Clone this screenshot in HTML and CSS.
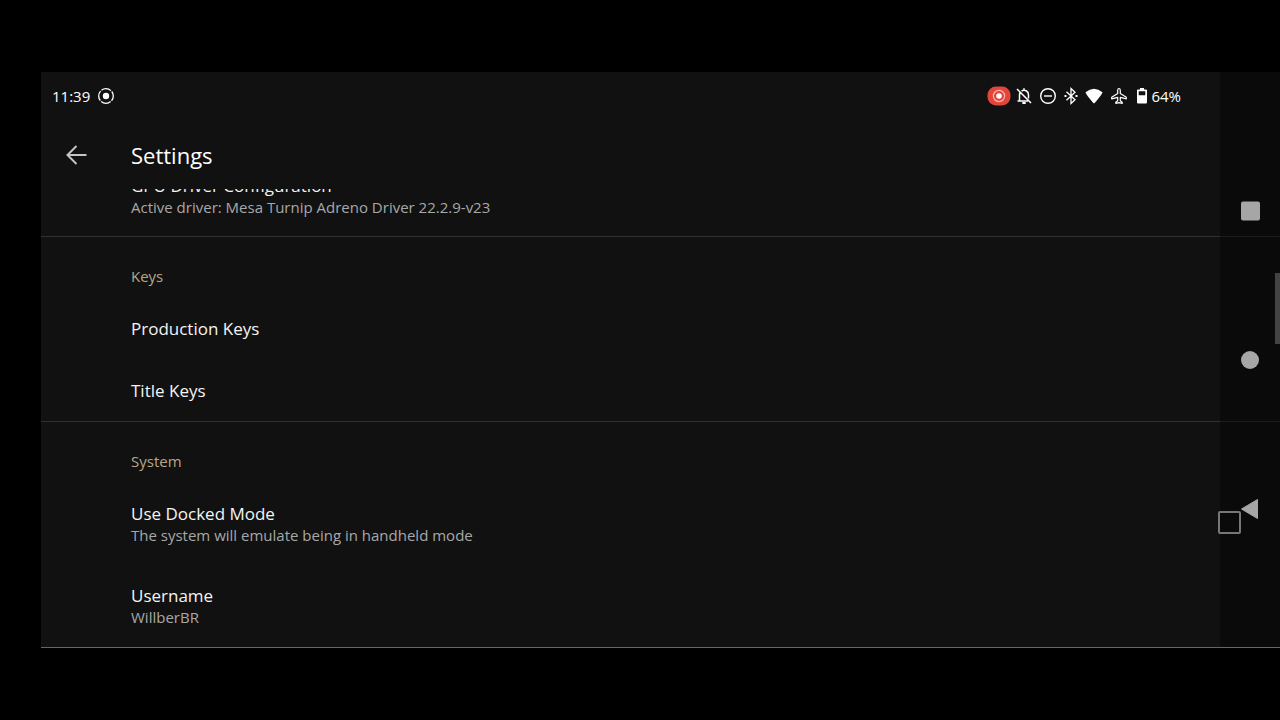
FILE: index.html
```html
<!DOCTYPE html>
<html lang="en">
<head>
<meta charset="utf-8">
<title>Settings</title>
<link rel="stylesheet" href="styles.css">
</head>
<body>
<div class="device">
  <div class="statusbar">
    <span class="clock">11:39</span>
    <svg class="cast" width="18" height="18" viewBox="0 0 18 18" fill="none" stroke="#fff"><circle cx="9" cy="9" r="7.3" stroke-width="1.3" stroke-dasharray="10.27 1.2" stroke-dashoffset="5.13"/><circle cx="9" cy="9" r="3.2" fill="#fff" stroke="none"/></svg>
    <div class="status-icons">
      <svg class="record" width="24" height="20" viewBox="0 0 24 20" fill="none"><rect x="0.5" y="0.5" width="23" height="19" rx="8.5" fill="#e2453a"/><circle cx="12" cy="10" r="5.6" stroke="#ffb9b2" stroke-width="1.2"/><circle cx="12" cy="10" r="2.8" fill="#fff"/></svg>
      <svg width="18" height="18" viewBox="0 0 18 18" fill="none" stroke="#fff" stroke-width="1.5"><path d="M2 2l14 14M2.5 14H13M4.500 14V8q0-1.500.6-2.500M6.500 4Q9 2.500 11.500 4 13.500 5.200 13.500 8v3.500M9 1.200v2"/><path d="M7.300 16h3.400" stroke-width="2"/></svg>
      <svg width="18" height="18" viewBox="0 0 18 18" fill="none" stroke="#fff" stroke-width="1.4"><circle cx="9" cy="9" r="7.300"/><path d="M5 9h8"/></svg>
      <svg width="16" height="18" viewBox="0 0 16 18" fill="none" stroke="#fff" stroke-width="1.300"><path d="M3.500 4.800l8.500 8L8 16.500v-15L12 5.200l-8.500 8"/><path d="M1.500 9h2M12.500 9h2" stroke-width="1.800"/></svg>
      <svg width="18" height="16" viewBox="0 0 18 16" fill="#fff"><path d="M.5 4.300Q9-2.800 17.500 4.300 17.500 6 9.700 14.900q-.7.700-1.400 0Q.5 6 .5 4.300z"/></svg>
      <svg class="plane" width="18" height="18" viewBox="0 0 18 18" fill="none" stroke="#fff" stroke-width="1.200" stroke-linejoin="round"><path d="M9 1.500q1.200 0 1.300 1.800v3.200l6 3.800v1.500l-6-1.500v3.500l1.900 1.500v1.100L9 15.600l-3.200.8v-1.100l1.900-1.500v-3.500l-6 1.500v-1.500l6-3.800V3.300Q7.800 1.500 9 1.500z"/></svg>
      <svg class="cell" width="12" height="18" viewBox="0 0 12 18"><path fill="#fff" fill-rule="evenodd" d="M4 1h4v1.500h2q1 0 1 1v12q0 1-1 1H2q-1 0-1-1v-12q0-1 1-1h2zM2.700 4.200v4h6.600v-4z"/></svg>
      <span class="battery">64%</span>
    </div>
  </div>
  <header class="toolbar">
    <button class="back" aria-label="Back"><svg width="24" height="24" viewBox="0 0 24 24" fill="none" stroke="#c4c4c4" stroke-width="2"><path d="M21.500 12H3M11.500 3L2.500 12l9 9"/></svg></button>
    <h1>Settings</h1>
  </header>
  <main class="viewport">
    <div class="list">
      <section>
        <div class="item"><div class="title">GPU Driver Configuration</div><div class="summary">Active driver: Mesa Turnip Adreno Driver 22.2.9-v23</div></div>
      </section>
      <section>
        <h2>Keys</h2>
        <div class="item"><div class="title">Production Keys</div></div>
        <div class="item"><div class="title">Title Keys</div></div>
      </section>
      <section>
        <h2>System</h2>
        <div class="item"><div class="title">Use Docked Mode</div><div class="summary">The system will emulate being in handheld mode</div></div>
        <div class="item"><div class="title">Username</div><div class="summary">WillberBR</div></div>
      </section>
    </div>
  </main>
  <nav class="navrail">
    <button aria-label="Recents"><svg width="20" height="20" viewBox="0 0 20 20"><rect x="1" y=".5" width="19" height="19" rx="2" fill="#a6a6a6"/></svg></button>
    <button aria-label="Home"><svg width="20" height="20" viewBox="0 0 20 20"><circle cx="10" cy="10" r="9" fill="#a6a6a6"/></svg></button>
    <button aria-label="Back"><svg width="20" height="20" viewBox="0 0 20 20"><path d="M17.500 .5v19L1.500 10z" fill="#a6a6a6" stroke="#a6a6a6" stroke-linejoin="round"/></svg></button>
    <span class="rotate"></span>
  </nav>
  <span class="scrollbar"></span>
</div>
</body>
</html>
```
FILE: styles.css
```css
* { box-sizing: border-box; }
body {
  margin: 0;
  min-height: 100vh;
  padding: 72px 0 72px 41px;
  display: flex;
  background: #000;
  color: #f4f4f4;
  font-family: "Open Sans", "Liberation Sans", sans-serif;
}
h1, h2 { margin: 0; font-weight: 400; }
button { padding: 0; border: 0; background: none; display: flex; }
.device {
  position: relative;
  flex: 1;
  display: flex;
  flex-direction: column;
  overflow: hidden;
  background: #111;
  border-bottom: 1px solid #666;
}
.statusbar {
  display: flex;
  align-items: center;
  height: 48px;
  padding: 0 99px 0 11px;
  color: #fff;
  font-size: 15px;
}
.cast { margin-left: 7px; }
.status-icons { display: flex; align-items: center; gap: 6px; margin-left: auto; }
.record { margin: 0 -2px; }
.plane, .cell { margin: 0 1px; }
.battery { margin-left: -4px; }
.toolbar {
  display: flex;
  align-items: center;
  height: 69px;
  padding-left: 24px;
  gap: 42px;
}
h1 { font-size: 22px; line-height: 26px; color: #fff; }
.viewport { flex: 1; overflow: hidden; }
.list { margin-top: -35px; }
section { border-bottom: 1px solid #303030; padding-left: 90px; }
section:last-child { border: 0; }
h2 {
  padding: 27px 0 9px;
  font-size: 15px;
  line-height: 24px;
  color: #b9a688;
}
.item { padding: 20px 0 18px; }
.title { font-size: 17px; line-height: 24px; }
.summary { padding-bottom: 2px; font-size: 15px; line-height: 18px; color: #a8a8a8; }
.navrail {
  position: absolute;
  top: 0;
  right: 0;
  bottom: -1px;
  width: 60px;
  display: flex;
  flex-direction: column;
  align-items: center;
  justify-content: center;
  gap: 129px;
  background: rgba(0, 0, 0, 0.4);
}
.rotate {
  position: absolute;
  left: -2px;
  bottom: 114px;
  width: 23px;
  height: 23px;
  border: 2px solid #777;
  border-radius: 2px;
}
.scrollbar {
  position: absolute;
  right: 0;
  top: 201px;
  width: 5px;
  height: 71px;
  background: #434343;
}
```
